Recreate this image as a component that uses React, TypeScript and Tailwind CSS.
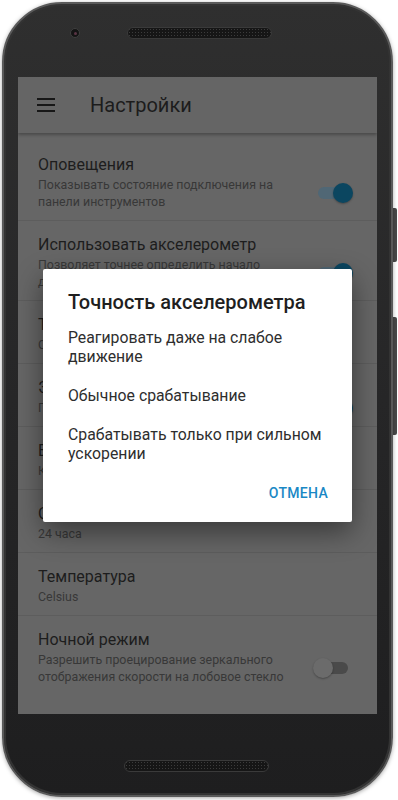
import React from 'react';

interface SettingItem {
  title: string;
  subtitle: string;
  toggle?: 'on' | 'off';
}

const items: SettingItem[] = [
  { title: 'Оповещения', subtitle: 'Показывать состояние подключения на панели инструментов', toggle: 'on' },
  { title: 'Использовать акселерометр', subtitle: 'Позволяет точнее определить начало движения', toggle: 'on' },
  { title: 'Точность акселерометра', subtitle: 'Стандартная' },
  { title: 'Экономия заряда', subtitle: 'Понижать яркость экрана', toggle: 'on' },
  { title: 'Единицы измерения', subtitle: 'Километры' },
  { title: 'Стиль часов', subtitle: '24 часа' },
  { title: 'Температура', subtitle: 'Celsius' },
  { title: 'Ночной режим', subtitle: 'Разрешить проецирование зеркального отображения скорости на лобовое стекло', toggle: 'off' },
];

const options = [
  'Реагировать даже на слабое движение',
  'Обычное срабатывание',
  'Срабатывать только при сильном ускорении',
];

const Toggle: React.FC<{ on: boolean }> = ({ on }) => (
  <div className="h-[17px] flex items-center shrink-0">
    <div className="relative w-[40px] h-[20px]">
      <div
        className={`absolute left-[5px] top-[4px] w-[30px] h-[12px] rounded-full ${
          on ? 'bg-[#506775]' : 'bg-[#4a4a4a]'
        }`}
      />
      <div
        className={`absolute top-0 w-[20px] h-[20px] rounded-full shadow-[0_1px_2px_rgba(0,0,0,0.3)] ${
          on ? 'left-[20px] bg-[#0b4660]' : 'left-0 bg-[#6b6b6b]'
        }`}
      />
    </div>
  </div>
);

const Speaker: React.FC = () => (
  <div className="w-[145px] h-[12px] rounded-full border border-[#3a3a3a] bg-[#161616] bg-[radial-gradient(circle,#3c3c3c_0.7px,transparent_0.9px)] bg-[length:3px_3px]" />
);

export default function App() {
  return (
    <div className="w-[398px] h-[800px] bg-white pt-[2px] pl-[2px]" style={{ fontFamily: 'Roboto, "Noto Sans", sans-serif' }}>
      <div className="relative w-[391px] h-[795px]">
        {/* side buttons */}
        <div className="absolute left-[390px] top-[206px] w-[5px] h-[54px] rounded-r-[2px] bg-[#4a4a4a]" />
        <div className="absolute left-[390px] top-[315px] w-[5px] h-[118px] rounded-r-[2px] bg-[#4a4a4a]" />

        <div className="relative w-[391px] h-[795px] rounded-[60px] border-[2px] border-[#5a5a5a] bg-gradient-to-b from-[#2f2f2f] via-[#262627] to-[#1e1e1f] shadow-[0_1px_4px_rgba(0,0,0,0.35),inset_0_0_0_2px_#333] flex flex-col">
          {/* top bezel */}
          <div className="h-[73px] pt-[23px] pl-[66px] flex items-start">
            <div className="flex items-center h-[12px]">
              <div className="w-[10px] h-[10px] rounded-full bg-[#141414] border border-[#3f3f3f] flex items-center justify-center">
                <div className="w-[3px] h-[3px] rounded-full bg-[#5a3545]" />
              </div>
              <div className="ml-[47px]">
                <Speaker />
              </div>
            </div>
          </div>

          {/* screen */}
          <div className="relative ml-[14px] w-[359px] h-[637px] bg-[#666666] overflow-hidden">
            <div className="h-[56px] flex items-center bg-[#656565] shadow-[0_2px_3px_rgba(0,0,0,0.28)] relative z-10">
              <div className="ml-[19px] w-[18px] flex flex-col gap-[4px]">
                <div className="h-[2px] bg-[#171717]" />
                <div className="h-[2px] bg-[#171717]" />
                <div className="h-[2px] bg-[#171717]" />
              </div>
              <div className="ml-[35px] text-[20px] text-[#1c1c1c] leading-none">Настройки</div>
            </div>

            <div className="pt-[8px]">
              {items.map((item, i) => (
                <div
                  key={i}
                  className={`pl-[20px] pr-[24px] pt-[14px] pb-[10px] ${
                    i < items.length - 1 ? 'border-b border-[#5d5d5d]' : ''
                  }`}
                >
                  <div className="text-[16px] leading-[20px] text-[#1d1d1d]">{item.title}</div>
                  <div className="mt-[1px] flex items-center">
                    <div className="flex-1 pr-[12px] text-[12.4px] leading-[17px] text-[#383838]">{item.subtitle}</div>
                    {item.toggle && <Toggle on={item.toggle === 'on'} />}
                  </div>
                </div>
              ))}
            </div>

            {/* dialog */}
            <div className="absolute left-[25px] top-[192px] w-[309px] h-[253px] bg-white rounded-[2px] shadow-[0_10px_28px_rgba(0,0,0,0.45)] flex flex-col">
              <div className="pt-[21px] px-[25px] text-[20px] leading-[24px] font-medium text-[#1f1f1f]">
                Точность акселерометра
              </div>
              <div className="mt-[14px] px-[25px] pr-[20px] flex flex-col gap-[20px]">
                {options.map((o) => (
                  <div key={o} className="text-[15.8px] leading-[19px] text-[#2e2e2e]">{o}</div>
                ))}
              </div>
              <div className="mt-[12px] h-[36px] pr-[24px] flex items-center justify-end">
                <span className="text-[14px] font-medium tracking-[0.3px] text-[#1a88c5]">ОТМЕНА</span>
              </div>
            </div>
          </div>

          {/* bottom bezel */}
          <div className="flex-1 flex justify-center pt-[46px] pr-[2px]">
            <Speaker />
          </div>
        </div>
      </div>
    </div>
  );
}
